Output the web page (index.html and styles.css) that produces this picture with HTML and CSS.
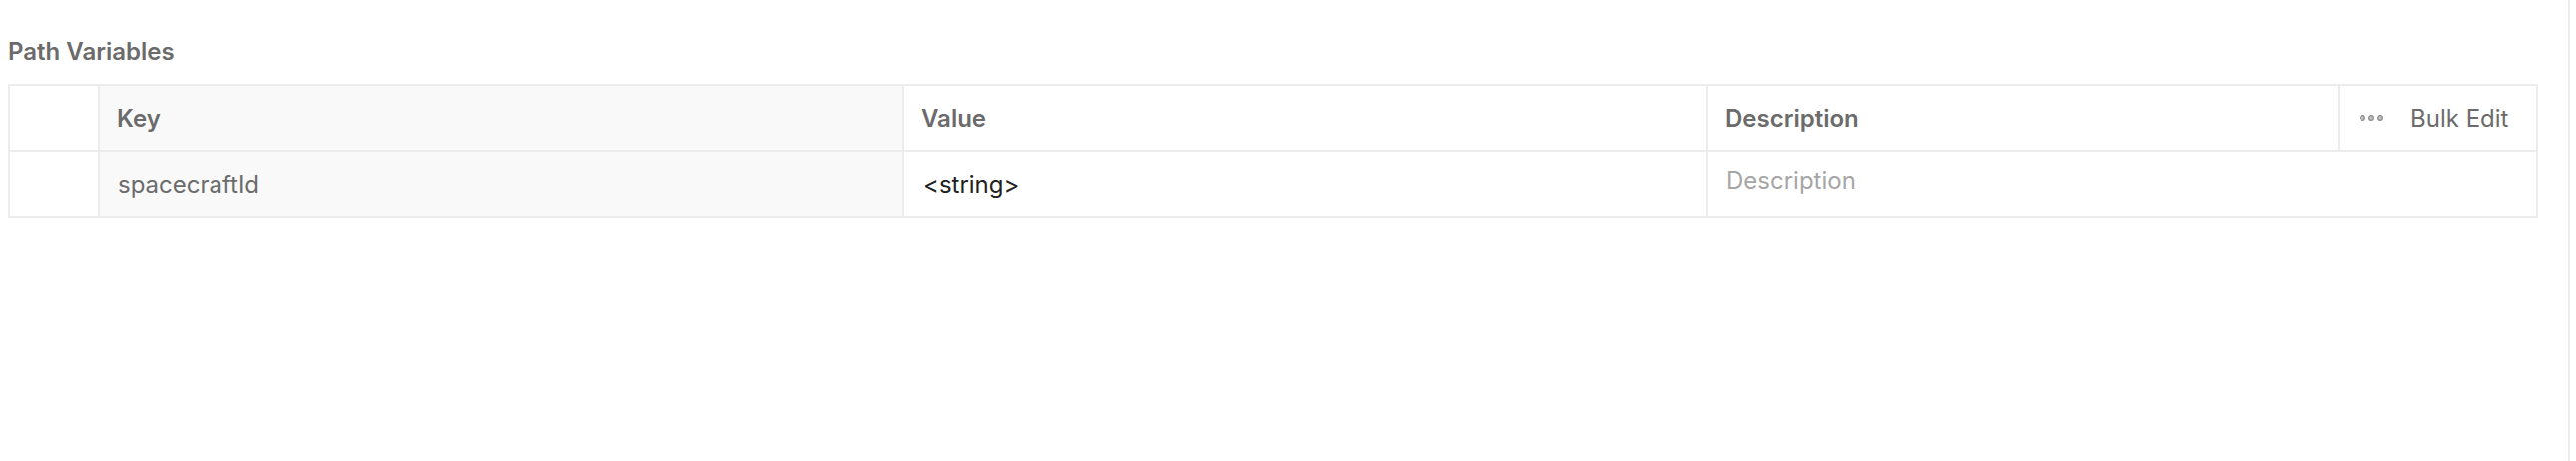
FILE: index.html
```html
<!DOCTYPE html>
<html lang="en">
<head>
<meta charset="utf-8">
<title>Path Variables</title>
<link rel="stylesheet" href="styles.css">
</head>
<body>
<div class="page">
  <main class="main">
    <h2 class="section-title">Path Variables</h2>
    <div class="params">
      <div class="cell cell-check"></div>
      <div class="cell cell-key head">Key</div>
      <div class="cell head">Value</div>
      <div class="cell cell-desc-head">
        <span class="head desc-label">Description</span>
        <div class="bulk">
          <svg class="dots" width="26" height="8" viewBox="0 0 26 8" aria-hidden="true">
            <circle cx="4" cy="4" r="2.3" fill="#c4c4c4" stroke="#8a8a8a" stroke-width="1.2"/>
            <circle cx="13" cy="4" r="2.3" fill="#c4c4c4" stroke="#8a8a8a" stroke-width="1.2"/>
            <circle cx="22" cy="4" r="2.3" fill="#c4c4c4" stroke="#8a8a8a" stroke-width="1.2"/>
          </svg>
          <span class="bulk-label">Bulk Edit</span>
        </div>
      </div>

      <div class="cell cell-check"></div>
      <div class="cell cell-key key-text">spacecraftId</div>
      <div class="cell value-text">&lt;string&gt;</div>
      <div class="cell placeholder">Description</div>
    </div>
  </main>
  <aside class="side"></aside>
</div>
</body>
</html>
```

FILE: styles.css
```css
html, body {
  margin: 0;
  padding: 0;
  background: #ffffff;
}

body {
  font-family: Inter, "Noto Sans", "Liberation Sans", sans-serif;
  height: 462px;
  overflow: hidden;
}

.page {
  display: flex;
  height: 462px;
}

.main {
  flex: 0 0 2574px;
  box-sizing: border-box;
  padding: 40px 30px 0 8px;
}

.side {
  flex: 1;
  border-left: 2px solid #ececec;
}

.section-title {
  margin: 0 0 20px 0;
  font-size: 24px;
  line-height: 24px;
  font-weight: 600;
  color: #6b6b6b;
}

.params {
  display: grid;
  grid-template-columns: 88px 804px 804px 1fr;
  grid-auto-rows: 64px;
  gap: 2px;
  padding: 2px;
  background: #ececec;
}

.cell {
  box-sizing: border-box;
  background: #ffffff;
  display: flex;
  align-items: center;
  padding-left: 17px;
  font-size: 24px;
  color: #6b6b6b;
}

.cell-check {
  padding: 0;
}

.cell-key {
  background: #f9f9f9;
}

.head {
  font-weight: 600;
  color: #6b6b6b;
}

.key-text {
  padding-left: 18px;
}

.value-text {
  color: #212121;
  padding-left: 19px;
}

.placeholder {
  color: #a6a6a6;
  padding-left: 18px;
  padding-bottom: 7px;
}

.cell-desc-head {
  padding-left: 0;
  align-items: stretch;
}

.desc-label {
  flex: 1;
  display: flex;
  align-items: center;
  padding-left: 17px;
}

.bulk {
  box-sizing: border-box;
  flex: 0 0 199px;
  border-left: 2px solid #ececec;
  display: flex;
  align-items: center;
  padding-left: 19px;
  gap: 26px;
}

.dots {
  display: block;
}

.bulk-label {
  font-size: 24px;
  font-weight: 400;
  color: #6b6b6b;
  white-space: nowrap;
}
```
